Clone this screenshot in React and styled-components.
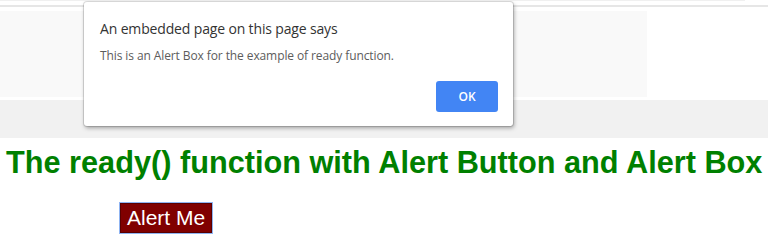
import React from "react";
import styled, { createGlobalStyle } from "styled-components";

const Global = createGlobalStyle`
  html, body { margin: 0; padding: 0; background: #ffffff; }
  body { width: 768px; height: 248px; overflow: hidden; font-family: "Liberation Sans", Arial, sans-serif; }
`;

const Page = styled.div`
  position: relative;
  width: 768px;
  height: 248px;
  display: flex;
  flex-direction: column;
`;

const TopStrip = styled.div`
  height: 5px;
  display: flex;
  flex-direction: column;
`;

const FaintLine = styled.div`
  width: 745px;
  height: 1px;
  background: #f0f0f0;
`;

const Rule = styled.div`
  height: 2px;
  background: #e6e6e6;
`;

const FrameArea = styled.div`
  height: 93px;
  padding-top: 4px;
  box-sizing: border-box;
  display: flex;
`;

const FramePanel = styled.div`
  width: 647px;
  height: 86px;
  background: #f9f9f9;
`;

const GrayBand = styled.div`
  height: 38px;
  background: #f1f1f1;
`;

const Heading = styled.h1`
  margin: 8px 0 0 0;
  font-family: "Liberation Sans", Arial, sans-serif;
  font-weight: bold;
  font-size: 30.7px;
  line-height: 34px;
  color: #008000;
  white-space: nowrap;
  padding-left: 6px;
`;

const ButtonRow = styled.div`
  margin-top: 23px;
  padding-left: 120px;
  display: flex;
`;

const AlertButton = styled.button`
  height: 30px;
  padding: 0 6px;
  background: #800000;
  color: #ffffff;
  border: 1px solid #5a0000;
  outline: 1px solid #8fb4f2;
  outline-offset: 0px;
  box-shadow: 0 0 0 1px #b9d0f7;
  font-family: "Liberation Sans", Arial, sans-serif;
  font-size: 21px;
  cursor: pointer;
`;

const Dialog = styled.div`
  position: absolute;
  left: 84px;
  top: 2px;
  width: 429px;
  height: 124px;
  background: #ffffff;
  border-radius: 3px;
  box-shadow: 0 0 0 1px rgba(0, 0, 0, 0.12), 1px 2px 4px rgba(0, 0, 0, 0.35);
  box-sizing: border-box;
  padding: 17px 15px 14px 16px;
  display: flex;
  flex-direction: column;
`;

const DialogTitle = styled.div`
  font-family: "Open Sans", "Noto Sans", sans-serif;
  font-size: 14px;
  color: #333333;
  line-height: 19px;
  letter-spacing: -0.15px;
`;

const DialogMessage = styled.div`
  margin-top: 10px;
  font-family: "Open Sans", "Noto Sans", sans-serif;
  font-size: 12px;
  color: #5c5c5c;
  line-height: 16px;
  letter-spacing: -0.1px;
`;

const DialogActions = styled.div`
  margin-top: auto;
  display: flex;
  justify-content: flex-end;
`;

const OkButton = styled.button`
  width: 62px;
  height: 31px;
  border: none;
  border-radius: 3px;
  background: #4285f4;
  color: #ffffff;
  font-family: "Open Sans", "Noto Sans", sans-serif;
  font-weight: 600;
  font-size: 12px;
`;

export default function App() {
  return (
    <>
      <Global />
      <Page>
        <TopStrip>
          <FaintLine />
        </TopStrip>
        <Rule />
        <FrameArea>
          <FramePanel />
        </FrameArea>
        <GrayBand />
        <Heading>The ready() function with Alert Button and Alert Box</Heading>
        <ButtonRow>
          <AlertButton>Alert Me</AlertButton>
        </ButtonRow>
        <Dialog>
          <DialogTitle>An embedded page on this page says</DialogTitle>
          <DialogMessage>This is an Alert Box for the example of ready function.</DialogMessage>
          <DialogActions>
            <OkButton>OK</OkButton>
          </DialogActions>
        </Dialog>
      </Page>
    </>
  );
}
